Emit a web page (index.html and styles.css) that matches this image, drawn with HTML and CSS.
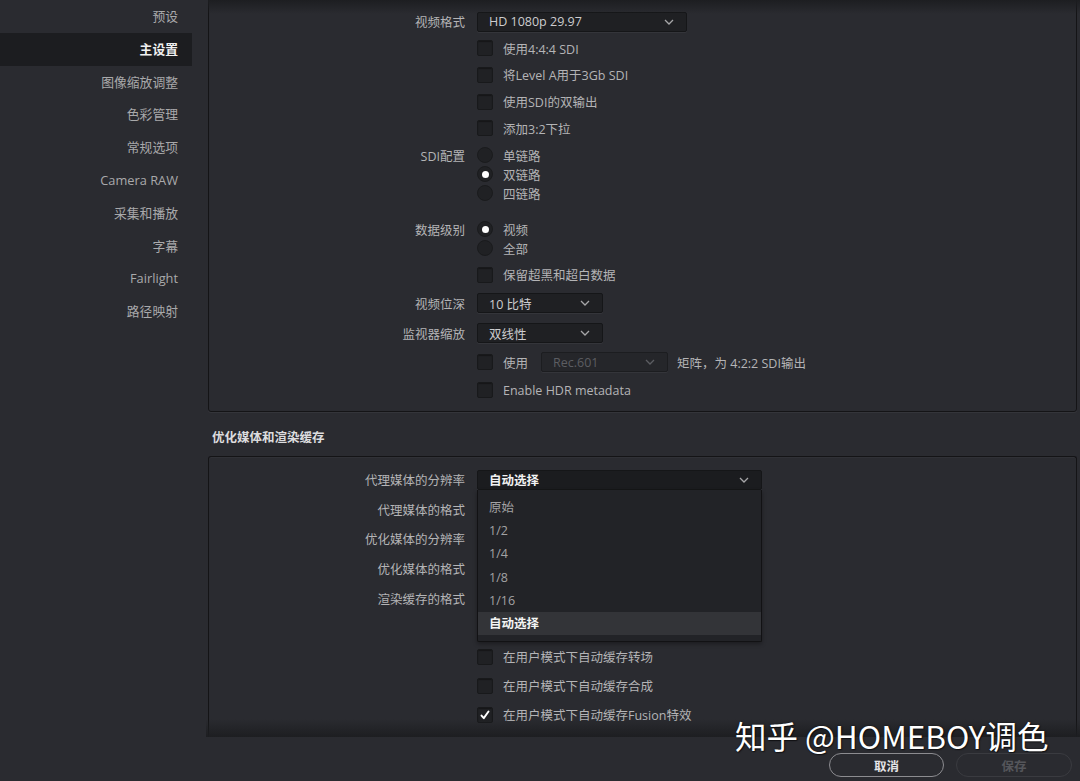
FILE: index.html
```html
<!DOCTYPE html>
<html lang="zh">
<head>
<meta charset="utf-8">
<title>主设置</title>
<link rel="stylesheet" href="styles.css">
</head>
<body>
<div class="app">
  <nav class="sidebar">
    <div class="nav-item">预设</div>
    <div class="nav-item active">主设置</div>
    <div class="nav-item">图像缩放调整</div>
    <div class="nav-item">色彩管理</div>
    <div class="nav-item">常规选项</div>
    <div class="nav-item">Camera RAW</div>
    <div class="nav-item">采集和播放</div>
    <div class="nav-item">字幕</div>
    <div class="nav-item">Fairlight</div>
    <div class="nav-item">路径映射</div>
  </nav>
  <main class="main">
    <div class="scroll">
      <div class="scroll-content">
        <section class="panel panel-top">
          <div class="row h27">
            <div class="label">视频格式</div>
            <div class="select w210"><span>HD 1080p 29.97</span><svg class="chev" viewBox="0 0 10 6"><path d="M1 1l4 4 4-4"/></svg></div>
          </div>
          <div class="row hc">
            <div class="label"></div>
            <span class="check"></span><span class="opt">使用4:4:4 SDI</span>
          </div>
          <div class="row hc">
            <div class="label"></div>
            <span class="check"></span><span class="opt">将Level A用于3Gb SDI</span>
          </div>
          <div class="row hc">
            <div class="label"></div>
            <span class="check"></span><span class="opt">使用SDI的双输出</span>
          </div>
          <div class="row hc">
            <div class="label"></div>
            <span class="check"></span><span class="opt">添加3:2下拉</span>
          </div>
          <div class="radio-group mt4">
            <div class="row hr"><div class="label">SDI配置</div><span class="radio"></span><span class="opt">单链路</span></div>
            <div class="row hr"><div class="label"></div><span class="radio on"></span><span class="opt">双链路</span></div>
            <div class="row hr"><div class="label"></div><span class="radio"></span><span class="opt">四链路</span></div>
          </div>
          <div class="radio-group mt17">
            <div class="row hr"><div class="label">数据级别</div><span class="radio on"></span><span class="opt">视频</span></div>
            <div class="row hr"><div class="label"></div><span class="radio"></span><span class="opt">全部</span></div>
          </div>
          <div class="row hc mt4">
            <div class="label"></div>
            <span class="check"></span><span class="opt">保留超黑和超白数据</span>
          </div>
          <div class="row h20 mt5">
            <div class="label">视频位深</div>
            <div class="select w126"><span>10 比特</span><svg class="chev" viewBox="0 0 10 6"><path d="M1 1l4 4 4-4"/></svg></div>
          </div>
          <div class="row h20 mt10">
            <div class="label">监视器缩放</div>
            <div class="select w126"><span>双线性</span><svg class="chev" viewBox="0 0 10 6"><path d="M1 1l4 4 4-4"/></svg></div>
          </div>
          <div class="row h20 mt9">
            <div class="label"></div>
            <span class="check"></span><span class="opt">使用</span>
            <div class="select w127 disabled"><span>Rec.601</span><svg class="chev" viewBox="0 0 10 6"><path d="M1 1l4 4 4-4"/></svg></div>
            <span class="opt after">矩阵，为 4:2:2 SDI输出</span>
          </div>
          <div class="row h20 mt8">
            <div class="label"></div>
            <span class="check"></span><span class="opt">Enable HDR metadata</span>
          </div>
        </section>

        <h2 class="section-title">优化媒体和渲染缓存</h2>

        <section class="panel panel-bottom">
          <div class="row hl">
            <div class="label">代理媒体的分辨率</div>
            <div class="dropdown">
              <div class="select w285 open"><span>自动选择</span><svg class="chev" viewBox="0 0 10 6"><path d="M1 1l4 4 4-4"/></svg></div>
              <ul class="menu">
                <li>原始</li>
                <li>1/2</li>
                <li>1/4</li>
                <li>1/8</li>
                <li>1/16</li>
                <li class="hl-item">自动选择</li>
              </ul>
            </div>
          </div>
          <div class="row hl"><div class="label">代理媒体的格式</div></div>
          <div class="row hl"><div class="label">优化媒体的分辨率</div></div>
          <div class="row hl"><div class="label">优化媒体的格式</div></div>
          <div class="row hl"><div class="label">渲染缓存的格式</div></div>
          <div class="row h29 mt29">
            <div class="label"></div>
            <span class="check"></span><span class="opt">在用户模式下自动缓存转场</span>
          </div>
          <div class="row h29">
            <div class="label"></div>
            <span class="check"></span><span class="opt">在用户模式下自动缓存合成</span>
          </div>
          <div class="row h29">
            <div class="label"></div>
            <span class="check checked"><svg viewBox="0 0 16 16"><path d="M4 8.6l2.6 3L12 4"/></svg></span><span class="opt">在用户模式下自动缓存Fusion特效</span>
          </div>
          <div class="row h29"><div class="label"></div></div>
        </section>
      </div>
      <div class="shade-top"></div>
      <div class="shade-bottom"></div>
    </div>
    <footer class="footer">
      <button class="btn">取消</button>
      <button class="btn btn-disabled">保存</button>
    </footer>
  </main>
  <div class="watermark">知乎 @HOMEBOY调色</div>
</div>
</body>
</html>
```

FILE: styles.css
```css
* { box-sizing: border-box; }

html, body {
  margin: 0;
  padding: 0;
  width: 1080px;
  height: 781px;
  overflow: hidden;
  background: #2a2b30;
  font-family: "Open Sans", "Noto Sans CJK SC", sans-serif;
  font-size: 12.5px;
  color: #b2b2b4;
}

.app {
  position: relative;
  display: flex;
  width: 1080px;
  height: 781px;
}

/* Sidebar */
.sidebar {
  width: 192px;
  flex: none;
  background: #2a2b30;
}

.nav-item {
  height: 32.8px;
  line-height: 32.8px;
  text-align: right;
  padding-right: 14px;
  font-size: 12.8px;
  color: #a9a9ab;
}

.nav-item.active {
  background: #1c1d20;
  color: #f0f0f0;
  font-weight: 600;
}

/* Main */
.main {
  flex: 1;
  display: flex;
  flex-direction: column;
  min-width: 0;
}

.scroll {
  position: relative;
  flex: 1;
  overflow: hidden;
  padding: 0 3px 0 16px;
}

.scroll-content {
  display: flex;
  flex-direction: column;
}

.shade-top {
  position: absolute;
  left: 16px;
  right: 0;
  top: 0;
  height: 14px;
  background: linear-gradient(#1d1e21, rgba(29, 30, 33, 0));
  pointer-events: none;
}

.shade-bottom {
  position: absolute;
  left: 14px;
  right: 0;
  bottom: 0;
  height: 18px;
  background: linear-gradient(rgba(26, 27, 30, 0), #1d1e21);
  pointer-events: none;
}

.panel {
  border: 1px solid #141416;
  border-radius: 3px;
  background: #2a2b30;
  box-shadow: 0 1px 0 #34353a, inset 0 1px 0 #303136;
}

.panel-top {
  margin-top: -6px;
  padding: 13px 0 11px;
}

.panel-bottom {
  padding: 7.5px 0 0;
  border-bottom: none;
}

.section-title {
  margin: 16px 0 8px;
  padding-left: 4px;
  font-size: 12.5px;
  line-height: 20px;
  font-weight: 600;
  color: #dcdcde;
}

/* Rows */
.row {
  display: flex;
  align-items: center;
}

.h27 { height: 27px; }
.hc { height: 26.67px; }
.hr { height: 19px; }
.h20 { height: 20px; }
.h29 { height: 29px; }
.hl { height: 29.67px; }

.mt4 { margin-top: 4px; }
.mt5 { margin-top: 5px; }
.mt8 { margin-top: 8px; }
.mt9 { margin-top: 9px; }
.mt10 { margin-top: 10px; }
.mt17 { margin-top: 17px; }
.mt29 { margin-top: 29px; }

.label {
  width: 256px;
  margin-right: 12px;
  flex: none;
  text-align: right;
  color: #b4b4b6;
  white-space: nowrap;
}

.opt {
  margin-left: 10px;
  color: #b4b4b6;
  white-space: nowrap;
}

.opt.after {
  margin-left: 9px;
}

/* Controls */
.check {
  width: 16px;
  height: 16px;
  flex: none;
  border-radius: 2px;
  background: #202124;
  border: 1px solid #18191b;
  box-shadow: inset 0 1px 1px rgba(0, 0, 0, 0.35);
  display: flex;
  align-items: center;
  justify-content: center;
}

.check svg {
  width: 16px;
  height: 16px;
}

.check svg path {
  fill: none;
  stroke: #ffffff;
  stroke-width: 2.2;
  stroke-linecap: round;
  stroke-linejoin: round;
}

.radio {
  width: 16px;
  height: 16px;
  flex: none;
  border-radius: 50%;
  background: #202124;
  border: 1px solid #1a1b1d;
  position: relative;
}

.radio.on::after {
  content: "";
  position: absolute;
  left: 3.5px;
  top: 3.5px;
  width: 7px;
  height: 7px;
  border-radius: 50%;
  background: #ffffff;
}

.select {
  height: 20px;
  flex: none;
  display: flex;
  align-items: center;
  justify-content: space-between;
  padding: 0 12px 0 11px;
  background: #1f2023;
  border: 1px solid #151618;
  border-radius: 2px;
  color: #cdcdcf;
  white-space: nowrap;
  box-shadow: 0 1px 0 #34353a;
}

.w210 { width: 210px; }
.w126 { width: 126px; }
.w127 { width: 127px; margin-left: 13px; }
.w285 { width: 285px; }

.select.disabled {
  background: #25262a;
  border-color: #1c1d20;
  color: #5c5d62;
}

.select.disabled .chev path { stroke: #5c5d62; }

.select.open {
  background: #1b1c1f;
  color: #f2f2f2;
  font-weight: 600;
}

.chev {
  width: 10px;
  height: 6px;
}

.chev path {
  fill: none;
  stroke: #a6a6a8;
  stroke-width: 1.3;
}

.dropdown {
  position: relative;
}

.menu {
  position: absolute;
  left: 0;
  top: 20px;
  width: 285px;
  margin: 0;
  padding: 6.5px 0 5.5px;
  list-style: none;
  background: #222327;
  border: 1px solid #121214;
  border-top: none;
  border-radius: 0 0 2px 2px;
  z-index: 5;
  box-shadow: 0 2px 4px rgba(0, 0, 0, 0.35);
}

.menu li {
  height: 23.2px;
  line-height: 23.2px;
  padding-left: 11px;
  color: #a2a2a4;
}

.menu li.hl-item {
  background: #333438;
  color: #f4f4f4;
  font-weight: 600;
}

/* Footer */
.footer {
  height: 44px;
  flex: none;
  display: flex;
  justify-content: flex-end;
  align-items: flex-start;
  gap: 12px;
  padding: 16px 8px 0 0;
  background: #2a2b30;
}

.btn {
  width: 115px;
  height: 24px;
  border-radius: 12px;
  border: 1px solid #8c8c90;
  background: transparent;
  color: #e4e4e6;
  font-family: "Open Sans", "Noto Sans CJK SC", sans-serif;
  font-size: 12.5px;
  font-weight: 600;
  padding: 0;
}

.btn-disabled {
  width: 116px;
  border-color: #3a3b40;
  color: #55565b;
}

/* Watermark overlay */
.watermark {
  position: absolute;
  left: 735px;
  top: 713px;
  font-family: "Noto Sans CJK SC", sans-serif;
  font-size: 31.5px;
  line-height: 44px;
  color: #ffffff;
  white-space: nowrap;
  text-shadow: 0 0 2px rgba(0, 0, 0, 0.7), 1px 1px 1px rgba(0, 0, 0, 0.5);
  z-index: 10;
}
```
